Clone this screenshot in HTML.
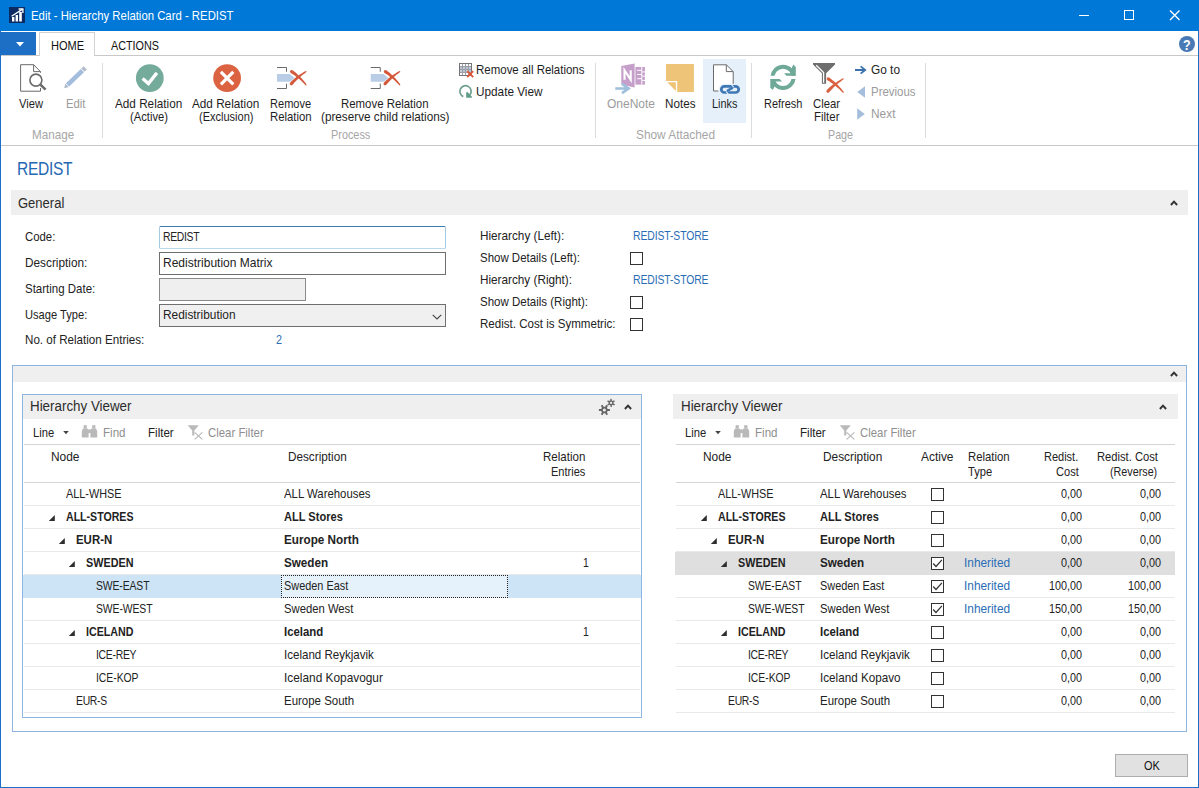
<!DOCTYPE html>
<html lang="en"><head><meta charset="utf-8"><title>Edit - Hierarchy Relation Card - REDIST</title>
<style>
html,body{margin:0;padding:0;background:#fff;}
body{width:1199px;height:788px;position:relative;overflow:hidden;font-family:"Liberation Sans", sans-serif;}
.a{position:absolute;box-sizing:border-box;}
.t{position:absolute;white-space:pre;line-height:normal;font-family:"Liberation Sans", sans-serif;transform-origin:0 0;display:block;}
svg{position:absolute;overflow:visible;}
</style></head>
<body>
<div class="a" style="left:0px;top:0px;width:1199px;height:31px;background:#0078d7;"></div>
<div class="a" style="left:0px;top:31px;width:1px;height:757px;background:#1a70c8;"></div>
<div class="a" style="left:1198px;top:31px;width:1px;height:757px;background:#1a70c8;"></div>
<div class="a" style="left:0px;top:787px;width:1199px;height:1px;background:#1a70c8;"></div>
<div class="a" style="left:1px;top:32px;width:35px;height:23px;background:#1c6fc4;"></div>
<div class="a" style="left:1px;top:55px;width:1197px;height:1px;background:#c8c8c8;"></div>
<div class="a" style="left:39px;top:32px;width:56px;height:24px;background:#fff;border:1px solid #d2d2d2;border-bottom:none;"></div>
<div class="a" style="left:1px;top:145px;width:1197px;height:1px;background:#c8c8c8;"></div>
<svg style="left:9px;top:7px" width="16" height="16" viewBox="0 0 16 16"><rect width="16" height="16" fill="#0c2b63"/>
<rect x="3" y="10" width="2.4" height="4.5" fill="#fff"/><rect x="6.6" y="8" width="2.4" height="6.5" fill="#fff"/><rect x="10.2" y="5" width="2.6" height="9.5" fill="#fff"/>
<path d="M2.6 9.2L13.2 2.4" stroke="#fff" stroke-width="1.3" fill="none"/><path d="M9.6 2H13.9V6" stroke="#fff" stroke-width="1.3" fill="none"/></svg>
<svg style="left:16px;top:42px" width="8" height="5" viewBox="0 0 8 5"><path d="M0 0H8L4 4.6Z" fill="#fff"/></svg>
<svg style="left:1078px;top:9px" width="104" height="12" viewBox="0 0 104 12"><g stroke="#fff" stroke-width="1" fill="none"><path d="M1 6.5H11"/><rect x="46.5" y="1.5" width="9" height="9"/><path d="M92 1.5L101.5 11M101.5 1.5L92 11" stroke-width="1.35"/></g></svg>
<svg style="left:1179px;top:36px" width="16" height="16" viewBox="0 0 16 16"><circle cx="8" cy="8" r="8" fill="#4a7ab5"/></svg>
<div class="a" style="left:102px;top:63px;width:1px;height:75px;background:#dcdcdc;"></div>
<div class="a" style="left:595px;top:63px;width:1px;height:75px;background:#dcdcdc;"></div>
<div class="a" style="left:751px;top:63px;width:1px;height:75px;background:#dcdcdc;"></div>
<div class="a" style="left:925px;top:63px;width:1px;height:75px;background:#dcdcdc;"></div>
<div class="a" style="left:703px;top:59px;width:43px;height:64px;background:#e5f0fa;"></div>
<div class="a" style="left:11px;top:190px;width:1177px;height:25px;background:#efefef;"></div>
<svg style="left:1170px;top:199.6px" width="8" height="6" viewBox="0 0 8 6"><path d="M0.9 5L4 1.6L7.1 5" stroke="#333" stroke-width="1.9" fill="none"/></svg>
<div class="a" style="left:159px;top:226px;width:287px;height:23px;background:#fff;border:1px solid #a4c9e3;border-top-color:#3d7bad;border-bottom-color:#b7d9ed;border-radius:1.5px;"></div>
<div class="a" style="left:159px;top:252px;width:287px;height:23px;background:#fff;border:1px solid #6f6f6f;"></div>
<div class="a" style="left:159px;top:278px;width:147px;height:23px;background:#efefef;border:1px solid #8a8a8a;"></div>
<div class="a" style="left:159px;top:304px;width:287px;height:23px;background:#f0f0f0;border:1px solid #6f6f6f;"></div>
<svg style="left:432.3px;top:313.6px" width="10" height="6" viewBox="0 0 10 6"><path d="M0.7 0.8L5 5L9.3 0.8" stroke="#444" stroke-width="1.1" fill="none"/></svg>
<div class="a" style="left:630px;top:252px;width:13px;height:13px;background:#fff;border:1px solid #333;"></div>
<div class="a" style="left:630px;top:296px;width:13px;height:13px;background:#fff;border:1px solid #333;"></div>
<div class="a" style="left:630px;top:318px;width:13px;height:13px;background:#fff;border:1px solid #333;"></div>
<div class="a" style="left:12px;top:365px;width:1175px;height:367px;background:#fff;border:1px solid #8db5e3;"></div>
<div class="a" style="left:13px;top:366px;width:1173px;height:16px;background:#efefef;"></div>
<svg style="left:1169.6px;top:370.8px" width="8" height="6" viewBox="0 0 8 6"><path d="M0.9 5L4 1.6L7.1 5" stroke="#333" stroke-width="1.9" fill="none"/></svg>
<div class="a" style="left:22px;top:394px;width:620px;height:324px;background:#fff;border:1px solid #8db5e3;"></div>
<div class="a" style="left:23px;top:395px;width:618px;height:24px;background:#efefef;"></div>
<svg style="left:623.6px;top:404px" width="8" height="6" viewBox="0 0 8 6"><path d="M0.9 5L4 1.6L7.1 5" stroke="#333" stroke-width="1.9" fill="none"/></svg>
<div class="a" style="left:673px;top:394px;width:505px;height:25px;background:#efefef;"></div>
<svg style="left:1158.8px;top:404px" width="8" height="6" viewBox="0 0 8 6"><path d="M0.9 5L4 1.6L7.1 5" stroke="#333" stroke-width="1.9" fill="none"/></svg>
<svg style="left:63px;top:431px" width="6" height="4" viewBox="0 0 6 4"><path d="M0.2 0H5.8L3 3.3Z" fill="#444"/></svg>
<div class="a" style="left:24px;top:444px;width:616px;height:1px;background:#d4d4d4;"></div>
<div class="a" style="left:24px;top:482px;width:616px;height:1px;background:#d4d4d4;"></div>
<div class="a" style="left:24px;top:505px;width:616px;height:1px;background:#e9e9e9;"></div>
<div class="a" style="left:24px;top:528px;width:616px;height:1px;background:#e9e9e9;"></div>
<div class="a" style="left:24px;top:551px;width:616px;height:1px;background:#e9e9e9;"></div>
<div class="a" style="left:24px;top:574px;width:616px;height:1px;background:#e9e9e9;"></div>
<div class="a" style="left:24px;top:597px;width:616px;height:1px;background:#e9e9e9;"></div>
<div class="a" style="left:24px;top:620px;width:616px;height:1px;background:#e9e9e9;"></div>
<div class="a" style="left:24px;top:643px;width:616px;height:1px;background:#e9e9e9;"></div>
<div class="a" style="left:24px;top:666px;width:616px;height:1px;background:#e9e9e9;"></div>
<div class="a" style="left:24px;top:689px;width:616px;height:1px;background:#e9e9e9;"></div>
<div class="a" style="left:24px;top:712px;width:616px;height:1px;background:#e9e9e9;"></div>
<svg style="left:715px;top:431px" width="6" height="4" viewBox="0 0 6 4"><path d="M0.2 0H5.8L3 3.3Z" fill="#444"/></svg>
<div class="a" style="left:676px;top:444px;width:499px;height:1px;background:#d4d4d4;"></div>
<div class="a" style="left:676px;top:482px;width:499px;height:1px;background:#d4d4d4;"></div>
<div class="a" style="left:676px;top:505px;width:499px;height:1px;background:#e9e9e9;"></div>
<div class="a" style="left:676px;top:528px;width:499px;height:1px;background:#e9e9e9;"></div>
<div class="a" style="left:676px;top:551px;width:499px;height:1px;background:#e9e9e9;"></div>
<div class="a" style="left:676px;top:574px;width:499px;height:1px;background:#e9e9e9;"></div>
<div class="a" style="left:676px;top:597px;width:499px;height:1px;background:#e9e9e9;"></div>
<div class="a" style="left:676px;top:620px;width:499px;height:1px;background:#e9e9e9;"></div>
<div class="a" style="left:676px;top:643px;width:499px;height:1px;background:#e9e9e9;"></div>
<div class="a" style="left:676px;top:666px;width:499px;height:1px;background:#e9e9e9;"></div>
<div class="a" style="left:676px;top:689px;width:499px;height:1px;background:#e9e9e9;"></div>
<div class="a" style="left:676px;top:712px;width:499px;height:1px;background:#e9e9e9;"></div>
<div class="a" style="left:23px;top:575px;width:618px;height:23px;background:#cde4f7;"></div>
<div class="a" style="left:281px;top:575px;width:227px;height:23px;background:#e5f1fb;border:1px dotted #222;"></div>
<div class="a" style="left:675px;top:552px;width:500px;height:23px;background:#dfdfdf;"></div>
<svg style="left:49.0px;top:515px" width="6" height="6" viewBox="0 0 6 6"><path d="M5.8 0V6H-0.2Z" fill="#2e2e2e"/></svg>
<svg style="left:59.0px;top:538px" width="6" height="6" viewBox="0 0 6 6"><path d="M5.8 0V6H-0.2Z" fill="#2e2e2e"/></svg>
<svg style="left:69.0px;top:561px" width="6" height="6" viewBox="0 0 6 6"><path d="M5.8 0V6H-0.2Z" fill="#2e2e2e"/></svg>
<svg style="left:69.0px;top:630px" width="6" height="6" viewBox="0 0 6 6"><path d="M5.8 0V6H-0.2Z" fill="#2e2e2e"/></svg>
<svg style="left:701.0px;top:515px" width="6" height="6" viewBox="0 0 6 6"><path d="M5.8 0V6H-0.2Z" fill="#2e2e2e"/></svg>
<svg style="left:711.0px;top:538px" width="6" height="6" viewBox="0 0 6 6"><path d="M5.8 0V6H-0.2Z" fill="#2e2e2e"/></svg>
<svg style="left:721.0px;top:561px" width="6" height="6" viewBox="0 0 6 6"><path d="M5.8 0V6H-0.2Z" fill="#2e2e2e"/></svg>
<svg style="left:721.0px;top:630px" width="6" height="6" viewBox="0 0 6 6"><path d="M5.8 0V6H-0.2Z" fill="#2e2e2e"/></svg>
<div class="a" style="left:931px;top:488px;width:13px;height:13px;background:#fff;border:1px solid #333;"></div>
<div class="a" style="left:931px;top:511px;width:13px;height:13px;background:#fff;border:1px solid #333;"></div>
<div class="a" style="left:931px;top:534px;width:13px;height:13px;background:#fff;border:1px solid #333;"></div>
<div class="a" style="left:931px;top:557px;width:13px;height:13px;background:#fff;border:1px solid #333;"></div>
<svg style="left:931px;top:557px" width="13" height="13" viewBox="0 0 13 13"><path d="M2.2 6.5L5 9.5L10.9 2.9" stroke="#333" stroke-width="1.2" fill="none"/></svg>
<div class="a" style="left:931px;top:580px;width:13px;height:13px;background:#fff;border:1px solid #333;"></div>
<svg style="left:931px;top:580px" width="13" height="13" viewBox="0 0 13 13"><path d="M2.2 6.5L5 9.5L10.9 2.9" stroke="#333" stroke-width="1.2" fill="none"/></svg>
<div class="a" style="left:931px;top:603px;width:13px;height:13px;background:#fff;border:1px solid #333;"></div>
<svg style="left:931px;top:603px" width="13" height="13" viewBox="0 0 13 13"><path d="M2.2 6.5L5 9.5L10.9 2.9" stroke="#333" stroke-width="1.2" fill="none"/></svg>
<div class="a" style="left:931px;top:626px;width:13px;height:13px;background:#fff;border:1px solid #333;"></div>
<div class="a" style="left:931px;top:649px;width:13px;height:13px;background:#fff;border:1px solid #333;"></div>
<div class="a" style="left:931px;top:672px;width:13px;height:13px;background:#fff;border:1px solid #333;"></div>
<div class="a" style="left:931px;top:695px;width:13px;height:13px;background:#fff;border:1px solid #333;"></div>
<div class="a" style="left:1115px;top:754px;width:73px;height:23px;background:#e1e1e1;border:1px solid #adadad;"></div>
<svg style="left:0;top:0" width="1199" height="788" viewBox="0 0 1199 788"><path d="M40.5 72.8V71.6L33.6 64.7H20.6V91.2H40.5V88" fill="none" stroke="#6b6b6b" stroke-width="1"/><path d="M33.6 64.7V71.6H40.5" fill="none" stroke="#6b6b6b" stroke-width="1"/><circle cx="35.9" cy="80.1" r="6" fill="#fff" stroke="#6b6b6b" stroke-width="1.6"/><path d="M40.4 84.6L45.6 89.6" stroke="#6b6b6b" stroke-width="2.6" stroke-linecap="butt"/><g transform="translate(64.2 88.2) rotate(-44)"><path d="M0 0L4 -2.3V2.3Z" fill="#aab6c9"/><rect x="4.7" y="-2.3" width="20.6" height="4.6" fill="#a4bddd"/><rect x="26" y="-2.3" width="3.2" height="4.6" fill="#b3bcc9"/></g><circle cx="149.8" cy="78.1" r="13.9" fill="#74ab9b"/><path d="M142.6 78.6L148.4 83.6L156.9 72.9" fill="none" stroke="#fff" stroke-width="3.3"/><circle cx="227.1" cy="78.1" r="13.9" fill="#db6342"/><path d="M220.9 71.9L233.3 84.3M233.3 71.9L220.9 84.3" fill="none" stroke="#fff" stroke-width="3.2"/><g transform="translate(0 0)"><path d="M277 67.5H286.5V71.8M277 88.5H286.5V83.7" fill="none" stroke="#6b6b6b" stroke-width="1"/><path d="M277 74H290L294.6 77.9L290 81.8H277Z" fill="#b9cde6"/><path d="M289.89 71.62L290.73 73.00L291.97 73.75L293.20 74.54L294.42 75.36L295.62 76.23L296.81 77.13L297.99 78.07L299.16 79.05L300.32 80.06L301.46 81.11L302.59 82.20L303.70 83.33L304.80 84.50L306.12 85.52L306.68 85.08L305.92 83.57L304.92 82.27L303.89 81.01L302.85 79.78L301.79 78.58L300.71 77.42L299.61 76.29L298.48 75.19L297.34 74.13L296.18 73.10L295.00 72.10L293.80 71.14L292.57 70.21L290.91 69.98Z" fill="#d4583b"/><path d="M306.22 71.07L304.70 71.56L303.36 72.33L302.04 73.13L300.74 73.95L299.46 74.80L298.21 75.68L296.99 76.59L295.78 77.52L294.60 78.49L293.45 79.48L292.31 80.50L291.21 81.55L290.12 82.63L289.66 84.24L291.14 85.49L292.62 84.85L293.54 83.72L294.48 82.62L295.45 81.54L296.45 80.48L297.48 79.44L298.53 78.42L299.62 77.43L300.73 76.46L301.87 75.51L303.04 74.58L304.24 73.68L305.47 72.80L306.58 71.69Z" fill="#d4583b"/></g><g transform="translate(93.75 0)"><path d="M277 67.5H286.5V71.8M277 88.5H286.5V83.7" fill="none" stroke="#6b6b6b" stroke-width="1"/><path d="M277 74H290L294.6 77.9L290 81.8H277Z" fill="#b9cde6"/><path d="M289.89 71.62L290.73 73.00L291.97 73.75L293.20 74.54L294.42 75.36L295.62 76.23L296.81 77.13L297.99 78.07L299.16 79.05L300.32 80.06L301.46 81.11L302.59 82.20L303.70 83.33L304.80 84.50L306.12 85.52L306.68 85.08L305.92 83.57L304.92 82.27L303.89 81.01L302.85 79.78L301.79 78.58L300.71 77.42L299.61 76.29L298.48 75.19L297.34 74.13L296.18 73.10L295.00 72.10L293.80 71.14L292.57 70.21L290.91 69.98Z" fill="#d4583b"/><path d="M306.22 71.07L304.70 71.56L303.36 72.33L302.04 73.13L300.74 73.95L299.46 74.80L298.21 75.68L296.99 76.59L295.78 77.52L294.60 78.49L293.45 79.48L292.31 80.50L291.21 81.55L290.12 82.63L289.66 84.24L291.14 85.49L292.62 84.85L293.54 83.72L294.48 82.62L295.45 81.54L296.45 80.48L297.48 79.44L298.53 78.42L299.62 77.43L300.73 76.46L301.87 75.51L303.04 74.58L304.24 73.68L305.47 72.80L306.58 71.69Z" fill="#d4583b"/></g><rect x="459.5" y="63.5" width="12" height="12" fill="#9c9fa6" stroke="#767676" stroke-width="1"/><rect x="460" y="64" width="2" height="2" fill="#fff"/><rect x="463" y="64" width="2" height="2" fill="#fff"/><rect x="466" y="64" width="2" height="2" fill="#fff"/><rect x="469" y="64" width="2" height="2" fill="#fff"/><rect x="460" y="67" width="2" height="2" fill="#b4c3d8"/><rect x="463" y="67" width="2" height="2" fill="#c3cbd6"/><rect x="466" y="67" width="2" height="2" fill="#b4c3d8"/><rect x="469" y="67" width="2" height="2" fill="#c3cbd6"/><rect x="460" y="70" width="2" height="2" fill="#c3cbd6"/><rect x="463" y="70" width="2" height="2" fill="#b4c3d8"/><rect x="466" y="70" width="2" height="2" fill="#c3cbd6"/><rect x="469" y="70" width="2" height="2" fill="#b4c3d8"/><rect x="460" y="73" width="2" height="2" fill="#fff"/><rect x="463" y="73" width="2" height="2" fill="#fff"/><rect x="466" y="73" width="2" height="2" fill="#fff"/><rect x="469" y="73" width="2" height="2" fill="#fff"/><path d="M467.2 71.2L473.2 77.2M473.2 71.2L467.2 77.2" stroke="#e0583a" stroke-width="1.9" fill="none"/><path d="M463.3 96.6A5.65 5.65 0 1 1 470 94.8" fill="none" stroke="#6f9f90" stroke-width="1.7"/><path d="M466.2 92.2V97.8H471.8V96.4L467.8 92.2Z" fill="#5f9c88"/><path d="M621.3 66L634.6 63.4V87.6L621.3 84.4Z" fill="#c59ec9"/><rect x="635.4" y="67" width="9.5" height="17.6" fill="#c59ec9"/><path d="M637.2 70.3H641.4M637.2 74.5H641.4M637.2 78.7H641.4M641.8 67V84.6M642.3 71.9H645M642.3 76.1H645M642.3 80.4H645" stroke="#fff" stroke-width="1"/><path d="M624.5 79.8V70.2L630.7 79.8V70.2" fill="none" stroke="#fff" stroke-width="2.1"/><path d="M615.3 88.5H626M622 83.9L628.6 88.5L622 93.2" fill="none" stroke="#9fbfdc" stroke-width="2.7"/><path d="M666 64H693.9V91.9H677.2V80.9H666Z" fill="#eec578"/><path d="M667.2 82.2H675.9V90.9Z" fill="#eec578"/><path d="M733.2 91H713.5V64.8H726.3L733.2 71.6Z" fill="#fff" stroke="none"/><path d="M718.4 91H713.5V64.8H726.3L733.2 71.6V85" fill="none" stroke="#6b6b6b" stroke-width="1"/><path d="M726.3 64.8V71.6H733.2" fill="none" stroke="#6b6b6b" stroke-width="1"/><rect x="721.3" y="86.3" width="17.4" height="6.2" rx="3.1" fill="#e5f0fa" stroke="#e5f0fa" stroke-width="5"/><rect x="721.3" y="86.3" width="17.4" height="6.2" rx="3.1" fill="#e5f0fa" stroke="#3f78b5" stroke-width="2.7"/><path d="M727 91L732.8 87.6" stroke="#3f78b5" stroke-width="2.5" fill="none"/><path d="M731.2 84.2L733.6 87.2M726.2 91.6L728.6 94.6" stroke="#e5f0fa" stroke-width="1.1" fill="none"/><defs><clipPath id="rfc"><rect x="764" y="58" width="40" height="17.75"/></clipPath></defs><g clip-path="url(#rfc)"><circle cx="783.05" cy="77.35" r="10.6" fill="none" stroke="#6fa998" stroke-width="4"/></g><path d="M793.3 64.6L795.8 67V75.75H786.4L784.1 73.3H790.6L791.2 69Z" fill="#6fa998"/><g transform="rotate(180 783.05 77.35)"><g clip-path="url(#rfc)"><circle cx="783.05" cy="77.35" r="10.6" fill="none" stroke="#6fa998" stroke-width="4"/></g><path d="M793.3 64.6L795.8 67V75.75H786.4L784.1 73.3H790.6L791.2 69Z" fill="#6fa998"/></g><path d="M813 63H835V64.6L826.1 73.2V83.7H821.9V73.2L813 64.6Z" fill="#6d6d6d"/><path d="M816.2 65.2L823.6 72.5V82.8" fill="none" stroke="#fff" stroke-width="1.3"/><path d="M826.50 78.92L827.39 80.32L828.68 81.07L829.95 81.87L831.22 82.70L832.46 83.57L833.70 84.48L834.92 85.43L836.13 86.41L837.33 87.43L838.51 88.49L839.68 89.59L840.83 90.73L841.97 91.90L843.32 92.93L843.88 92.47L843.08 90.95L842.03 89.64L840.97 88.37L839.88 87.14L838.78 85.93L837.65 84.76L836.51 83.62L835.34 82.52L834.16 81.45L832.95 80.41L831.72 79.41L830.47 78.44L829.20 77.50L827.50 77.28Z" fill="#d9603f"/><path d="M843.42 78.37L841.86 78.87L840.47 79.64L839.10 80.44L837.76 81.27L836.44 82.13L835.15 83.01L833.88 83.92L832.63 84.87L831.41 85.84L830.21 86.83L829.04 87.86L827.90 88.92L826.77 90.00L826.27 91.63L827.73 92.89L829.24 92.25L830.20 91.12L831.18 90.01L832.19 88.92L833.23 87.85L834.30 86.80L835.40 85.78L836.52 84.78L837.68 83.80L838.87 82.84L840.09 81.91L841.34 81.00L842.62 80.11L843.78 78.99Z" fill="#d9603f"/><path d="M855 70H864.4M860.6 66.4L865.2 70L860.6 73.6" fill="none" stroke="#3b72ae" stroke-width="1.8"/><path d="M865 86.2V97.8L857.2 92Z" fill="#a5bedb"/><path d="M857.2 108.2V119.8L864.8 114Z" fill="#a5bedb"/><path d="M607.65 409.00L609.92 409.05L609.92 410.95L607.65 411.00L606.89 412.31L607.98 414.31L606.34 415.25L605.15 413.32L603.65 413.32L602.46 415.25L600.82 414.31L601.91 412.31L601.15 411.00L598.88 410.95L598.88 409.05L601.15 409.00L601.91 407.69L600.82 405.69L602.46 404.75L603.65 406.68L605.15 406.68L606.34 404.75L607.98 405.69L606.89 407.69Z" fill="#666"/><circle cx="604.4" cy="410" r="1.5" fill="#efefef"/><path d="M613.55 403.40L614.98 404.23L614.31 405.45L612.84 404.69L611.89 405.27L611.89 406.92L610.50 406.96L610.42 405.31L609.44 404.77L608.01 405.59L607.29 404.41L608.68 403.51L608.65 402.40L607.22 401.57L607.89 400.35L609.36 401.11L610.31 400.53L610.31 398.88L611.70 398.84L611.78 400.49L612.76 401.03L614.19 400.21L614.91 401.39L613.52 402.29Z" fill="#666"/><circle cx="611.1" cy="402.9" r="1.1" fill="#efefef"/><g transform="translate(0 0)" fill="#b9b9b9"><rect x="83.6" y="425.2" width="3.2" height="3.4"/><rect x="92.2" y="425.2" width="3.2" height="3.4"/><path d="M83 428.4H87.6L88.6 431V437.6H81.8V431Z"/><path d="M91.4 428.4H96L97.2 431V437.6H90.4V431Z"/><rect x="88" y="429.4" width="3" height="3.6"/></g><g transform="translate(0 0)"><path d="M187.7 425.2H198.8L194.3 430.6V435.5H192.2V430.6Z" fill="#b9b9b9"/><path d="M194.6 432.4L202.4 439.4M202.4 432.4L194.6 439.4" stroke="#b9b9b9" stroke-width="1.2" fill="none"/></g><g transform="translate(652 0)" fill="#b9b9b9"><rect x="83.6" y="425.2" width="3.2" height="3.4"/><rect x="92.2" y="425.2" width="3.2" height="3.4"/><path d="M83 428.4H87.6L88.6 431V437.6H81.8V431Z"/><path d="M91.4 428.4H96L97.2 431V437.6H90.4V431Z"/><rect x="88" y="429.4" width="3" height="3.6"/></g><g transform="translate(652 0)"><path d="M187.7 425.2H198.8L194.3 430.6V435.5H192.2V430.6Z" fill="#b9b9b9"/><path d="M194.6 432.4L202.4 439.4M202.4 432.4L194.6 439.4" stroke="#b9b9b9" stroke-width="1.2" fill="none"/></g></svg>
<span class="t" style="left:1183.20px;top:36.18px;font-size:14.94px;color:#fff;transform:scaleX(0.8400);font-weight:700;">?</span>
<span class="t" style="left:30.50px;top:9.01px;font-size:12.36px;color:#fff;transform:scaleX(0.9184);">Edit - Hierarchy Relation Card - REDIST</span>
<span class="t" style="left:50.50px;top:38.61px;font-size:12.36px;color:#111;transform:scaleX(0.8950);">HOME</span>
<span class="t" style="left:111.20px;top:38.61px;font-size:12.36px;color:#111;transform:scaleX(0.8737);">ACTIONS</span>
<span class="t" style="left:19.20px;top:96.81px;font-size:12.36px;color:#1e1e1e;transform:scaleX(0.9030);">View</span>
<span class="t" style="left:65.50px;top:96.81px;font-size:12.36px;color:#9b9b9b;transform:scaleX(0.9150);">Edit</span>
<span class="t" style="left:114.50px;top:96.81px;font-size:12.36px;color:#1e1e1e;transform:scaleX(0.9494);">Add Relation</span>
<span class="t" style="left:129.50px;top:110.01px;font-size:12.36px;color:#1e1e1e;transform:scaleX(0.9071);">(Active)</span>
<span class="t" style="left:192.00px;top:96.81px;font-size:12.36px;color:#1e1e1e;transform:scaleX(0.9494);">Add Relation</span>
<span class="t" style="left:198.70px;top:110.01px;font-size:12.36px;color:#1e1e1e;transform:scaleX(0.8914);">(Exclusion)</span>
<span class="t" style="left:269.50px;top:96.81px;font-size:12.36px;color:#1e1e1e;transform:scaleX(0.8950);">Remove</span>
<span class="t" style="left:269.50px;top:110.01px;font-size:12.36px;color:#1e1e1e;transform:scaleX(0.9193);">Relation</span>
<span class="t" style="left:340.50px;top:96.81px;font-size:12.36px;color:#1e1e1e;transform:scaleX(0.9229);">Remove Relation</span>
<span class="t" style="left:320.70px;top:110.01px;font-size:12.36px;color:#1e1e1e;transform:scaleX(0.9495);">(preserve child relations)</span>
<span class="t" style="left:476.00px;top:63.01px;font-size:12.36px;color:#1e1e1e;transform:scaleX(0.9291);">Remove all Relations</span>
<span class="t" style="left:476.00px;top:85.21px;font-size:12.36px;color:#1e1e1e;transform:scaleX(0.9519);">Update View</span>
<span class="t" style="left:607.00px;top:96.81px;font-size:12.36px;color:#9b9b9b;transform:scaleX(0.9703);">OneNote</span>
<span class="t" style="left:665.00px;top:96.81px;font-size:12.36px;color:#1e1e1e;transform:scaleX(0.9444);">Notes</span>
<span class="t" style="left:711.70px;top:96.81px;font-size:12.36px;color:#1e1e1e;transform:scaleX(0.8767);">Links</span>
<span class="t" style="left:763.70px;top:96.81px;font-size:12.36px;color:#1e1e1e;transform:scaleX(0.8849);">Refresh</span>
<span class="t" style="left:812.50px;top:96.81px;font-size:12.36px;color:#1e1e1e;transform:scaleX(0.9138);">Clear</span>
<span class="t" style="left:814.00px;top:110.01px;font-size:12.36px;color:#1e1e1e;transform:scaleX(0.9283);">Filter</span>
<span class="t" style="left:870.50px;top:63.01px;font-size:12.36px;color:#1e1e1e;transform:scaleX(0.9592);">Go to</span>
<span class="t" style="left:870.50px;top:85.21px;font-size:12.36px;color:#9b9b9b;transform:scaleX(0.9253);">Previous</span>
<span class="t" style="left:870.50px;top:107.21px;font-size:12.36px;color:#9b9b9b;transform:scaleX(0.9637);">Next</span>
<span class="t" style="left:32.00px;top:128.01px;font-size:12.36px;color:#a6a6a6;transform:scaleX(0.9447);">Manage</span>
<span class="t" style="left:330.70px;top:128.01px;font-size:12.36px;color:#a6a6a6;transform:scaleX(0.8801);">Process</span>
<span class="t" style="left:635.50px;top:128.01px;font-size:12.36px;color:#a6a6a6;transform:scaleX(0.9579);">Show Attached</span>
<span class="t" style="left:828.00px;top:128.01px;font-size:12.36px;color:#a6a6a6;transform:scaleX(0.8658);">Page</span>
<span class="t" style="left:17.00px;top:157.92px;font-size:18.54px;color:#2468b2;transform:scaleX(0.8400);letter-spacing:-0.379px;">REDIST</span>
<span class="t" style="left:18.20px;top:195.35px;font-size:14.42px;color:#2b2b2b;transform:scaleX(0.9031);">General</span>
<span class="t" style="left:25.20px;top:230.01px;font-size:12.36px;color:#222;transform:scaleX(0.9186);">Code:</span>
<span class="t" style="left:25.20px;top:256.01px;font-size:12.36px;color:#222;transform:scaleX(0.9546);">Description:</span>
<span class="t" style="left:25.20px;top:281.81px;font-size:12.36px;color:#222;transform:scaleX(0.9302);">Starting Date:</span>
<span class="t" style="left:25.20px;top:307.61px;font-size:12.36px;color:#222;transform:scaleX(0.9007);">Usage Type:</span>
<span class="t" style="left:25.20px;top:332.81px;font-size:12.36px;color:#222;transform:scaleX(0.9387);">No. of Relation Entries:</span>
<span class="t" style="left:276.00px;top:332.81px;font-size:12.36px;color:#2a6db5;transform:scaleX(0.8727);">2</span>
<span class="t" style="left:162.50px;top:230.01px;font-size:12.36px;color:#222;transform:scaleX(0.8400);letter-spacing:-0.375px;">REDIST</span>
<span class="t" style="left:162.50px;top:256.01px;font-size:12.36px;color:#222;transform:scaleX(0.9720);">Redistribution Matrix</span>
<span class="t" style="left:162.50px;top:307.61px;font-size:12.36px;color:#222;transform:scaleX(0.9593);">Redistribution</span>
<span class="t" style="left:480.00px;top:229.21px;font-size:12.36px;color:#222;transform:scaleX(0.9502);">Hierarchy (Left):</span>
<span class="t" style="left:480.00px;top:251.21px;font-size:12.36px;color:#222;transform:scaleX(0.9273);">Show Details (Left):</span>
<span class="t" style="left:480.00px;top:273.01px;font-size:12.36px;color:#222;transform:scaleX(0.9500);">Hierarchy (Right):</span>
<span class="t" style="left:480.00px;top:295.01px;font-size:12.36px;color:#222;transform:scaleX(0.9303);">Show Details (Right):</span>
<span class="t" style="left:480.00px;top:316.81px;font-size:12.36px;color:#222;transform:scaleX(0.9351);">Redist. Cost is Symmetric:</span>
<span class="t" style="left:633.20px;top:229.21px;font-size:12.36px;color:#2a6db5;transform:scaleX(0.8400);letter-spacing:-0.112px;">REDIST-STORE</span>
<span class="t" style="left:633.20px;top:273.01px;font-size:12.36px;color:#2a6db5;transform:scaleX(0.8400);letter-spacing:-0.112px;">REDIST-STORE</span>
<span class="t" style="left:29.50px;top:397.95px;font-size:14.42px;color:#2b2b2b;transform:scaleX(0.9276);">Hierarchy Viewer</span>
<span class="t" style="left:681.30px;top:397.95px;font-size:14.42px;color:#2b2b2b;transform:scaleX(0.9276);">Hierarchy Viewer</span>
<span class="t" style="left:32.50px;top:426.01px;font-size:12.36px;color:#222;transform:scaleX(0.9070);">Line</span>
<span class="t" style="left:103.00px;top:426.01px;font-size:12.36px;color:#8f8f8f;transform:scaleX(0.9357);">Find</span>
<span class="t" style="left:148.00px;top:426.01px;font-size:12.36px;color:#222;transform:scaleX(0.9356);">Filter</span>
<span class="t" style="left:208.00px;top:426.01px;font-size:12.36px;color:#8f8f8f;transform:scaleX(0.9216);">Clear Filter</span>
<span class="t" style="left:50.50px;top:449.81px;font-size:12.36px;color:#222;transform:scaleX(0.9646);">Node</span>
<span class="t" style="left:684.50px;top:426.01px;font-size:12.36px;color:#222;transform:scaleX(0.9070);">Line</span>
<span class="t" style="left:755.00px;top:426.01px;font-size:12.36px;color:#8f8f8f;transform:scaleX(0.9357);">Find</span>
<span class="t" style="left:800.00px;top:426.01px;font-size:12.36px;color:#222;transform:scaleX(0.9356);">Filter</span>
<span class="t" style="left:860.00px;top:426.01px;font-size:12.36px;color:#8f8f8f;transform:scaleX(0.9216);">Clear Filter</span>
<span class="t" style="left:702.50px;top:449.81px;font-size:12.36px;color:#222;transform:scaleX(0.9646);">Node</span>
<span class="t" style="left:65.50px;top:487.21px;font-size:12.36px;color:#222;transform:scaleX(0.8783);">ALL-WHSE</span>
<span class="t" style="left:284.20px;top:487.21px;font-size:12.36px;color:#222;transform:scaleX(0.9213);">ALL Warehouses</span>
<span class="t" style="left:65.50px;top:510.21px;font-size:12.36px;color:#222;transform:scaleX(0.8571);font-weight:700;">ALL-STORES</span>
<span class="t" style="left:284.20px;top:510.21px;font-size:12.36px;color:#222;transform:scaleX(0.8949);font-weight:700;">ALL Stores</span>
<span class="t" style="left:75.50px;top:533.21px;font-size:12.36px;color:#222;transform:scaleX(0.9249);font-weight:700;">EUR-N</span>
<span class="t" style="left:284.20px;top:533.21px;font-size:12.36px;color:#222;transform:scaleX(0.9472);font-weight:700;">Europe North</span>
<span class="t" style="left:85.50px;top:556.21px;font-size:12.36px;color:#222;transform:scaleX(0.8756);font-weight:700;">SWEDEN</span>
<span class="t" style="left:284.20px;top:556.21px;font-size:12.36px;color:#222;transform:scaleX(0.9439);font-weight:700;">Sweden</span>
<span class="t" style="left:95.50px;top:579.21px;font-size:12.36px;color:#222;transform:scaleX(0.8400);letter-spacing:-0.125px;">SWE-EAST</span>
<span class="t" style="left:284.20px;top:579.21px;font-size:12.36px;color:#222;transform:scaleX(0.8813);">Sweden East</span>
<span class="t" style="left:95.50px;top:602.21px;font-size:12.36px;color:#222;transform:scaleX(0.8400);letter-spacing:-0.103px;">SWE-WEST</span>
<span class="t" style="left:284.20px;top:602.21px;font-size:12.36px;color:#222;transform:scaleX(0.9128);">Sweden West</span>
<span class="t" style="left:85.50px;top:625.21px;font-size:12.36px;color:#222;transform:scaleX(0.8646);font-weight:700;">ICELAND</span>
<span class="t" style="left:284.20px;top:625.21px;font-size:12.36px;color:#222;transform:scaleX(0.9227);font-weight:700;">Iceland</span>
<span class="t" style="left:95.50px;top:648.21px;font-size:12.36px;color:#222;transform:scaleX(0.8400);letter-spacing:-0.321px;">ICE-REY</span>
<span class="t" style="left:284.20px;top:648.21px;font-size:12.36px;color:#222;transform:scaleX(0.9337);">Iceland Reykjavik</span>
<span class="t" style="left:95.50px;top:671.21px;font-size:12.36px;color:#222;transform:scaleX(0.8400);letter-spacing:-0.039px;">ICE-KOP</span>
<span class="t" style="left:284.20px;top:671.21px;font-size:12.36px;color:#222;transform:scaleX(0.9595);">Iceland Kopavogur</span>
<span class="t" style="left:75.50px;top:694.21px;font-size:12.36px;color:#222;transform:scaleX(0.8400);letter-spacing:-0.331px;">EUR-S</span>
<span class="t" style="left:284.20px;top:694.21px;font-size:12.36px;color:#222;transform:scaleX(0.9273);">Europe South</span>
<span class="t" style="left:717.50px;top:487.21px;font-size:12.36px;color:#222;transform:scaleX(0.8783);">ALL-WHSE</span>
<span class="t" style="left:820.00px;top:487.21px;font-size:12.36px;color:#222;transform:scaleX(0.9213);">ALL Warehouses</span>
<span class="t" style="left:717.50px;top:510.21px;font-size:12.36px;color:#222;transform:scaleX(0.8571);font-weight:700;">ALL-STORES</span>
<span class="t" style="left:820.00px;top:510.21px;font-size:12.36px;color:#222;transform:scaleX(0.8949);font-weight:700;">ALL Stores</span>
<span class="t" style="left:727.50px;top:533.21px;font-size:12.36px;color:#222;transform:scaleX(0.9249);font-weight:700;">EUR-N</span>
<span class="t" style="left:820.00px;top:533.21px;font-size:12.36px;color:#222;transform:scaleX(0.9472);font-weight:700;">Europe North</span>
<span class="t" style="left:737.50px;top:556.21px;font-size:12.36px;color:#222;transform:scaleX(0.8756);font-weight:700;">SWEDEN</span>
<span class="t" style="left:820.00px;top:556.21px;font-size:12.36px;color:#222;transform:scaleX(0.9439);font-weight:700;">Sweden</span>
<span class="t" style="left:747.50px;top:579.21px;font-size:12.36px;color:#222;transform:scaleX(0.8400);letter-spacing:-0.125px;">SWE-EAST</span>
<span class="t" style="left:820.00px;top:579.21px;font-size:12.36px;color:#222;transform:scaleX(0.8813);">Sweden East</span>
<span class="t" style="left:747.50px;top:602.21px;font-size:12.36px;color:#222;transform:scaleX(0.8400);letter-spacing:-0.103px;">SWE-WEST</span>
<span class="t" style="left:820.00px;top:602.21px;font-size:12.36px;color:#222;transform:scaleX(0.9128);">Sweden West</span>
<span class="t" style="left:737.50px;top:625.21px;font-size:12.36px;color:#222;transform:scaleX(0.8646);font-weight:700;">ICELAND</span>
<span class="t" style="left:820.00px;top:625.21px;font-size:12.36px;color:#222;transform:scaleX(0.9227);font-weight:700;">Iceland</span>
<span class="t" style="left:747.50px;top:648.21px;font-size:12.36px;color:#222;transform:scaleX(0.8400);letter-spacing:-0.321px;">ICE-REY</span>
<span class="t" style="left:820.00px;top:648.21px;font-size:12.36px;color:#222;transform:scaleX(0.9337);">Iceland Reykjavik</span>
<span class="t" style="left:747.50px;top:671.21px;font-size:12.36px;color:#222;transform:scaleX(0.8400);letter-spacing:-0.039px;">ICE-KOP</span>
<span class="t" style="left:820.00px;top:671.21px;font-size:12.36px;color:#222;transform:scaleX(0.9446);">Iceland Kopavo</span>
<span class="t" style="left:727.50px;top:694.21px;font-size:12.36px;color:#222;transform:scaleX(0.8400);letter-spacing:-0.331px;">EUR-S</span>
<span class="t" style="left:820.00px;top:694.21px;font-size:12.36px;color:#222;transform:scaleX(0.9273);">Europe South</span>
<span class="t" style="left:287.50px;top:449.81px;font-size:12.36px;color:#222;transform:scaleX(0.9494);">Description</span>
<span class="t" style="left:543.20px;top:449.81px;font-size:12.36px;color:#222;transform:scaleX(0.9326);">Relation</span>
<span class="t" style="left:551.20px;top:465.01px;font-size:12.36px;color:#222;transform:scaleX(0.8916);">Entries</span>
<span class="t" style="left:583.20px;top:556.21px;font-size:12.36px;color:#222;transform:scaleX(0.8400);">1</span>
<span class="t" style="left:583.20px;top:625.21px;font-size:12.36px;color:#222;transform:scaleX(0.8400);">1</span>
<span class="t" style="left:823.20px;top:449.81px;font-size:12.36px;color:#222;transform:scaleX(0.9591);">Description</span>
<span class="t" style="left:921.20px;top:449.81px;font-size:12.36px;color:#222;transform:scaleX(0.9652);">Active</span>
<span class="t" style="left:967.50px;top:449.81px;font-size:12.36px;color:#222;transform:scaleX(0.9193);">Relation</span>
<span class="t" style="left:967.50px;top:465.01px;font-size:12.36px;color:#222;transform:scaleX(0.9031);">Type</span>
<span class="t" style="left:1044.40px;top:449.81px;font-size:12.36px;color:#222;transform:scaleX(0.8890);">Redist.</span>
<span class="t" style="left:1055.80px;top:465.01px;font-size:12.36px;color:#222;transform:scaleX(0.8969);">Cost</span>
<span class="t" style="left:1096.50px;top:449.81px;font-size:12.36px;color:#222;transform:scaleX(0.9045);">Redist. Cost</span>
<span class="t" style="left:1110.20px;top:465.01px;font-size:12.36px;color:#222;transform:scaleX(0.8698);">(Reverse)</span>
<span class="t" style="left:1061.20px;top:487.21px;font-size:12.36px;color:#222;transform:scaleX(0.8727);">0,00</span>
<span class="t" style="left:1140.00px;top:487.21px;font-size:12.36px;color:#222;transform:scaleX(0.8727);">0,00</span>
<span class="t" style="left:1061.20px;top:510.21px;font-size:12.36px;color:#222;transform:scaleX(0.8727);">0,00</span>
<span class="t" style="left:1140.00px;top:510.21px;font-size:12.36px;color:#222;transform:scaleX(0.8727);">0,00</span>
<span class="t" style="left:1061.20px;top:533.21px;font-size:12.36px;color:#222;transform:scaleX(0.8727);">0,00</span>
<span class="t" style="left:1140.00px;top:533.21px;font-size:12.36px;color:#222;transform:scaleX(0.8727);">0,00</span>
<span class="t" style="left:964.20px;top:556.21px;font-size:12.36px;color:#2a6db5;transform:scaleX(0.9582);">Inherited</span>
<span class="t" style="left:1061.20px;top:556.21px;font-size:12.36px;color:#222;transform:scaleX(0.8727);">0,00</span>
<span class="t" style="left:1140.00px;top:556.21px;font-size:12.36px;color:#222;transform:scaleX(0.8727);">0,00</span>
<span class="t" style="left:964.20px;top:579.21px;font-size:12.36px;color:#2a6db5;transform:scaleX(0.9582);">Inherited</span>
<span class="t" style="left:1049.20px;top:579.21px;font-size:12.36px;color:#222;transform:scaleX(0.8727);">100,00</span>
<span class="t" style="left:1128.00px;top:579.21px;font-size:12.36px;color:#222;transform:scaleX(0.8727);">100,00</span>
<span class="t" style="left:964.20px;top:602.21px;font-size:12.36px;color:#2a6db5;transform:scaleX(0.9582);">Inherited</span>
<span class="t" style="left:1049.20px;top:602.21px;font-size:12.36px;color:#222;transform:scaleX(0.8727);">150,00</span>
<span class="t" style="left:1128.00px;top:602.21px;font-size:12.36px;color:#222;transform:scaleX(0.8727);">150,00</span>
<span class="t" style="left:1061.20px;top:625.21px;font-size:12.36px;color:#222;transform:scaleX(0.8727);">0,00</span>
<span class="t" style="left:1140.00px;top:625.21px;font-size:12.36px;color:#222;transform:scaleX(0.8727);">0,00</span>
<span class="t" style="left:1061.20px;top:648.21px;font-size:12.36px;color:#222;transform:scaleX(0.8727);">0,00</span>
<span class="t" style="left:1140.00px;top:648.21px;font-size:12.36px;color:#222;transform:scaleX(0.8727);">0,00</span>
<span class="t" style="left:1061.20px;top:671.21px;font-size:12.36px;color:#222;transform:scaleX(0.8727);">0,00</span>
<span class="t" style="left:1140.00px;top:671.21px;font-size:12.36px;color:#222;transform:scaleX(0.8727);">0,00</span>
<span class="t" style="left:1061.20px;top:694.21px;font-size:12.36px;color:#222;transform:scaleX(0.8727);">0,00</span>
<span class="t" style="left:1140.00px;top:694.21px;font-size:12.36px;color:#222;transform:scaleX(0.8727);">0,00</span>
<span class="t" style="left:1143.50px;top:759.21px;font-size:12.36px;color:#111;transform:scaleX(0.8847);">OK</span>
</body></html>
